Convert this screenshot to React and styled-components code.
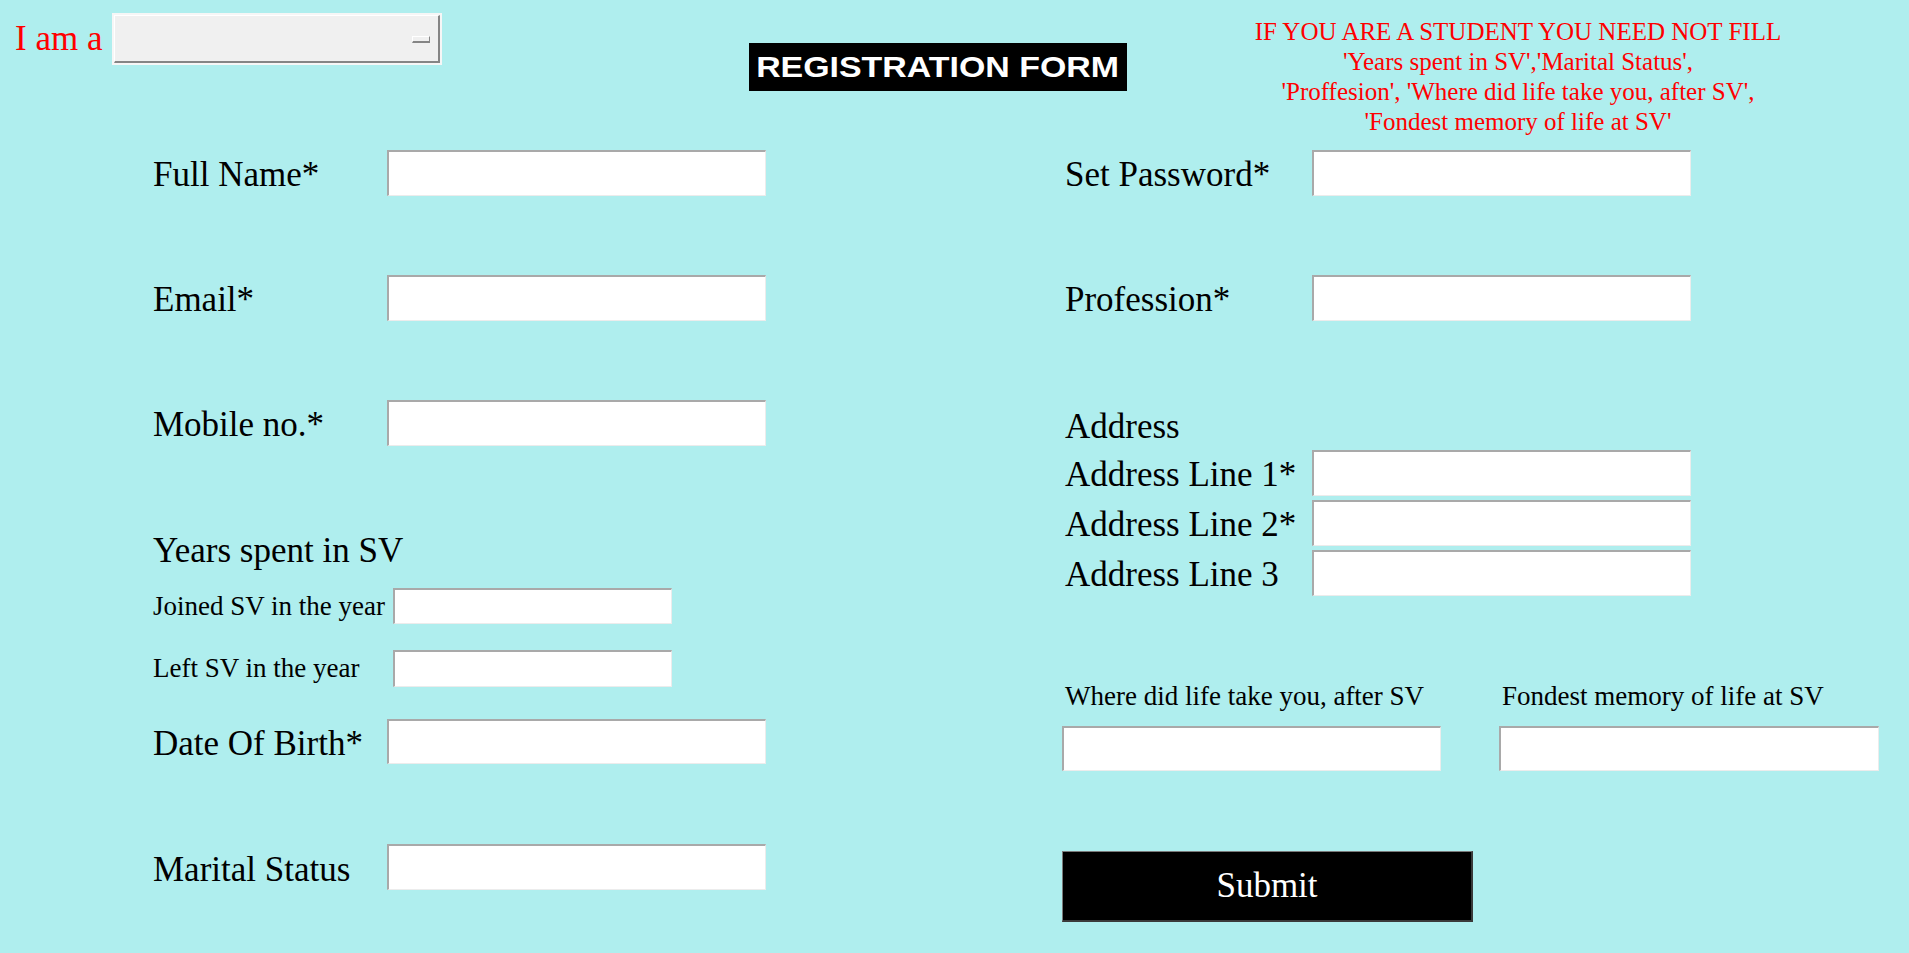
import styled, { createGlobalStyle } from "styled-components";

const GlobalStyle = createGlobalStyle`
  html, body {
    margin:0;
    padding:0;
    background:#afeeee;
  }
  body{
    font-family:"Liberation Serif","Times New Roman",serif;
    color:#000;
  }
`;

//left and right column rows, top to bottom
const leftRows = [
    { label: "Full Name*", mt: 0 },
    { label: "Email*", mt: 79 },
    { label: "Mobile no.*", mt: 79 },
];

const addressRows = ["Address Line 1*", "Address Line 2*", "Address Line 3"];

const App = () => {
    return (
    <Page>
        <GlobalStyle />
        <Header>
            <RoleGroup>
                <RoleLabel>I am a</RoleLabel>
                <SelectBox>
                    <DropMark />
                </SelectBox>
            </RoleGroup>
            <Title><span>REGISTRATION FORM</span></Title>
            <Note>
                IF YOU ARE A STUDENT YOU NEED NOT FILL<br />
                'Years spent in SV','Marital Status',<br />
                'Proffesion', 'Where did life take you, after SV',<br />
                'Fondest memory of life at SV'
            </Note>
        </Header>

        <Form>
            <Column>
                {leftRows.map((row, i) => (
                    <Row key={i} mt={row.mt}>
                        <Label width={234}>{row.label}</Label>
                        <Field width={379} height={46} />
                    </Row>
                ))}
                <Heading mt={85}>Years spent in SV</Heading>
                <Row mt={17}>
                    <Label width={240} small>Joined SV in the year</Label>
                    <Field width={279} height={36} />
                </Row>
                <Row mt={26}>
                    <Label width={240} small>Left SV in the year</Label>
                    <Field width={279} height={37} />
                </Row>
                <Row mt={32}>
                    <Label width={234}>Date Of Birth*</Label>
                    <Field width={379} height={45} />
                </Row>
                <Row mt={80}>
                    <Label width={234}>Marital Status</Label>
                    <Field width={379} height={46} />
                </Row>
            </Column>

            <Column>
                <Row mt={0}>
                    <Label width={250} indent>Set Password*</Label>
                    <Field width={379} height={46} />
                </Row>
                <Row mt={79}>
                    <Label width={250} indent>Profession*</Label>
                    <Field width={379} height={46} />
                </Row>
                <Heading mt={86} indent>Address</Heading>
                {addressRows.map((label) => (
                    <Row key={label} mt={label.endsWith("1*") ? 3 : 4}>
                        <Label width={250} indent>{label}</Label>
                        <Field width={379} height={46} />
                    </Row>
                ))}
                <Pair>
                    <PairItem>
                        <SmallLabel>Where did life take you, after SV</SmallLabel>
                        <Field width={379} height={45} />
                    </PairItem>
                    <PairItem>
                        <SmallLabel>Fondest memory of life at SV</SmallLabel>
                        <Field width={380} height={45} />
                    </PairItem>
                </Pair>
                <SubmitButton>Submit</SubmitButton>
            </Column>
        </Form>
    </Page>
    )
}

export default App;

const Page=styled.div`
    width:1909px;
    min-height:953px;
    background:#afeeee;
`

const Header=styled.header`
    display:grid;
    grid-template-columns:749px 378px 1fr;
    align-items:start;
    height:150px;
`

const RoleGroup=styled.div`
    display:flex;
    align-items:center;
    gap:10px;
    margin-top:13px;
    padding-left:15px;
`

const RoleLabel=styled.span`
    color:#ff0000;
    font-size:35px;
    line-height:40px;
`

const SelectBox=styled.div`
    box-sizing:border-box;
    width:326px;
    height:48px;
    margin:2px;
    background:#f0f0f0;
    border-style:solid;
    border-width:1px 2px 2px 1px;
    border-color:#ffffff #858585 #858585 #ffffff;
    box-shadow:0 0 0 2px #f6f6f6;
    display:flex;
    align-items:center;
    justify-content:flex-end;
    padding-right:8px;
`

const DropMark=styled.span`
    box-sizing:border-box;
    width:18px;
    height:7px;
    margin-top:2px;
    background:#f0f0f0;
    border-style:solid;
    border-width:1px 1px 2px 1px;
    border-color:#ffffff #858585 #858585 #ffffff;
`

const Title=styled.h1`
    margin:43px 0 0 0;
    height:48px;
    background:#000;
    color:#fff;
    font-family:"Liberation Sans",Arial,sans-serif;
    font-weight:700;
    font-size:30px;
    line-height:48px;
    text-align:center;
    overflow:hidden;

    span{
        display:inline-block;
        transform:scaleX(1.13);
    }
`

const Note=styled.p`
    margin:17px 0 0 0;
    color:#ff0000;
    font-size:25px;
    line-height:30px;
    text-align:center;
`

const Form=styled.main`
    display:grid;
    grid-template-columns:909px 1fr;
    padding-left:153px;
`

const Column=styled.div`
    display:flex;
    flex-direction:column;
    align-items:flex-start;
`

const Row=styled.div`
    display:flex;
    align-items:center;
    margin-top:${(props)=>props.mt}px;
`

const Label=styled.label`
    box-sizing:border-box;
    flex:none;
    width:${(props)=>props.width}px;
    padding-left:${(props)=>(props.indent ? 3 : 0)}px;
    padding-top:${(props)=>(props.small ? 1 : 5)}px;
    font-size:${(props)=>(props.small ? 27 : 35)}px;
    line-height:1.15;
    white-space:nowrap;
`

const Heading=styled.div`
    margin-top:${(props)=>props.mt}px;
    padding-left:${(props)=>(props.indent ? 3 : 0)}px;
    font-size:35px;
    line-height:40px;
`

const Field=styled.input`
    box-sizing:border-box;
    display:block;
    width:${(props)=>props.width}px;
    height:${(props)=>props.height}px;
    margin:0;
    padding:0 4px;
    background:#fff;
    border-style:solid;
    border-width:2px 1px 1px 2px;
    border-color:#a9a9a9 #ececec #ececec #a9a9a9;
    font-family:"Liberation Serif",serif;
    font-size:24px;
    outline:none;
`

const Pair=styled.div`
    display:grid;
    grid-template-columns:379px 380px;
    column-gap:58px;
    margin-top:85px;
`

const PairItem=styled.div`
    display:flex;
    flex-direction:column;
`

const SmallLabel=styled.span`
    font-size:27px;
    line-height:31px;
    padding-left:3px;
    margin-bottom:14px;
    white-space:nowrap;
`

const SubmitButton=styled.button`
    box-sizing:border-box;
    margin-top:80px;
    width:411px;
    height:71px;
    background:#000;
    color:#fff;
    font-family:"Liberation Serif","Times New Roman",serif;
    font-size:35px;
    border-style:solid;
    border-width:1px 2px 2px 1px;
    border-color:#7a7a7a #3a3a3a #3a3a3a #7a7a7a;
    padding:0;
    cursor:pointer;
`
